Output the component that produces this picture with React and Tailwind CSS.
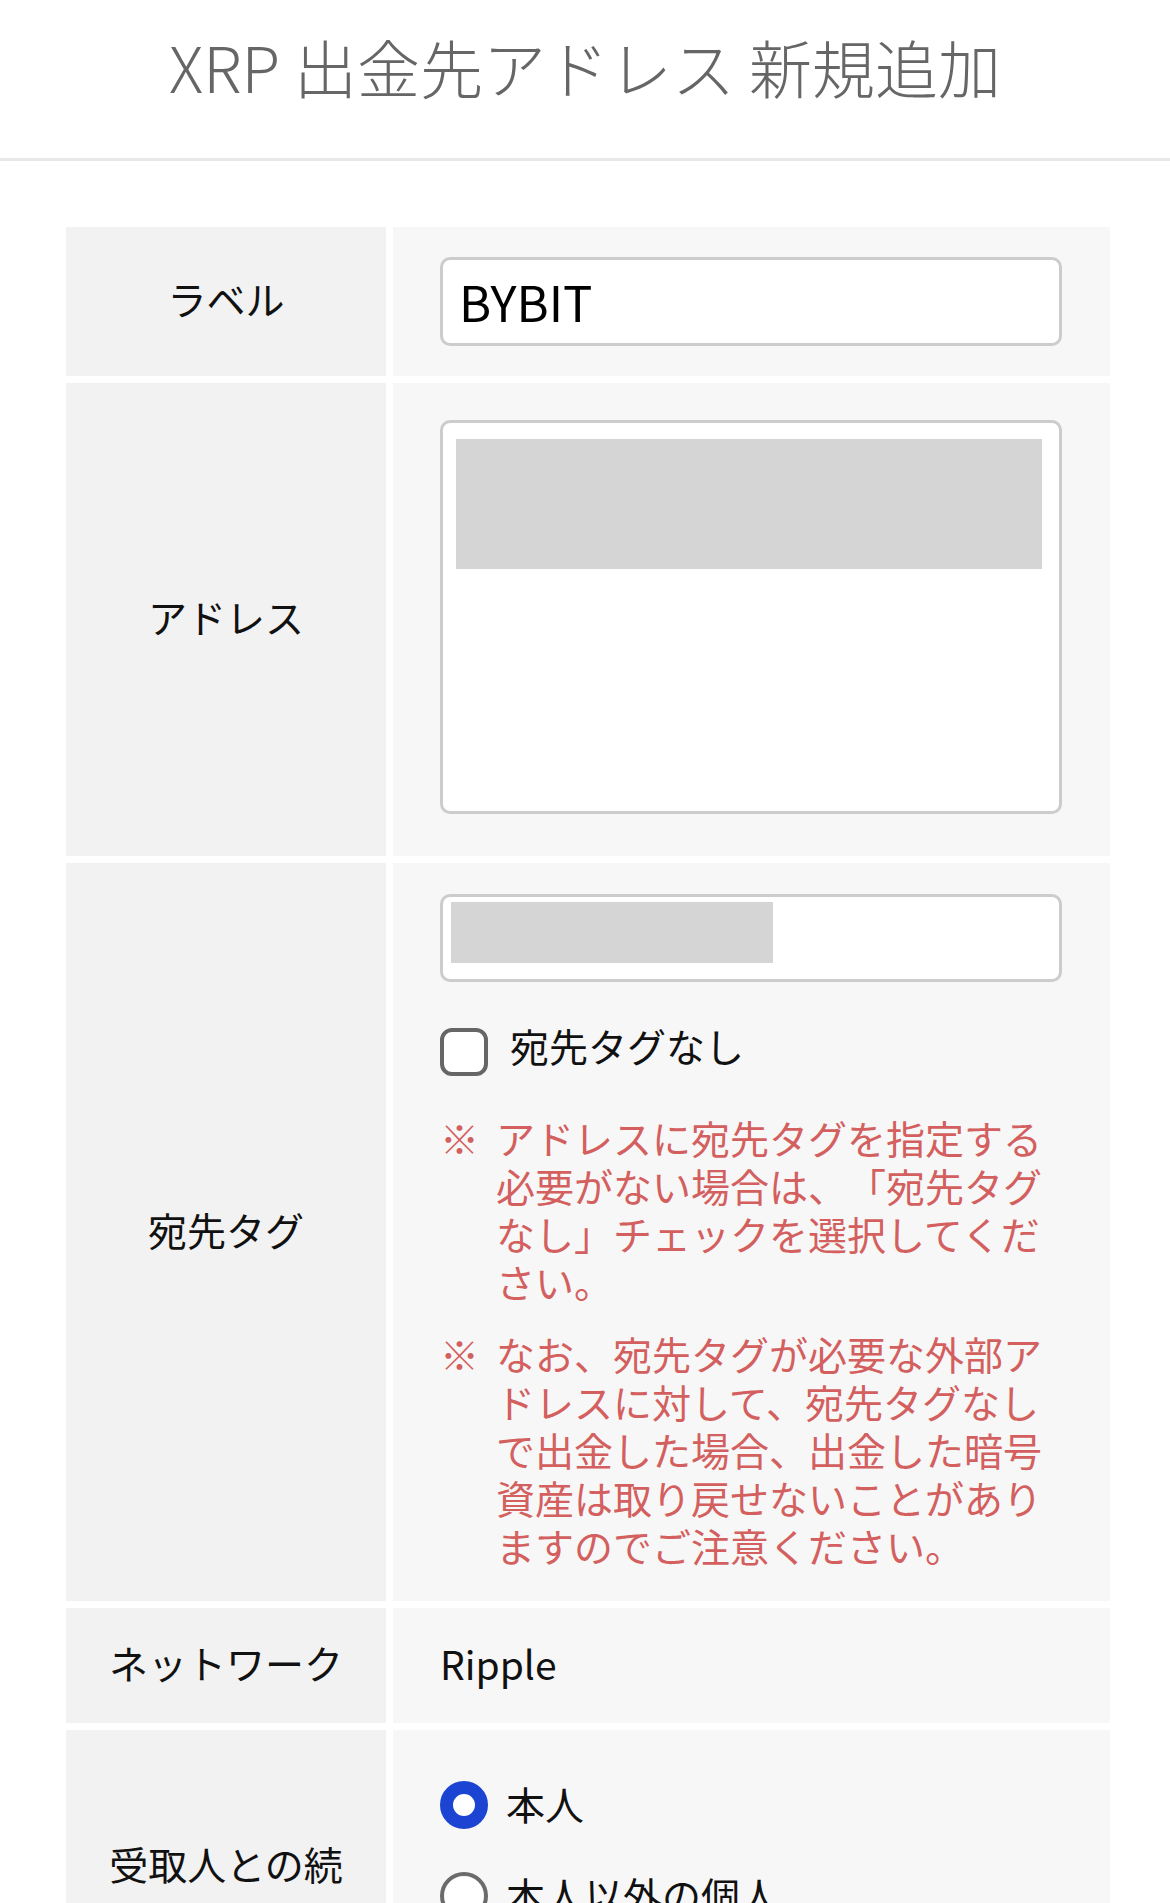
import React from "react";

const font = { fontFamily: '"Noto Sans CJK JP", "Noto Sans", sans-serif' };

function Label({ children, leading = "leading-[48px]" }) {
  return (
    <div className={"bg-[#f2f2f2] flex items-center justify-center px-[30px] pb-[7px] text-center text-[39px] text-[#111] " + leading}>
      {children}
    </div>
  );
}

function Note({ lines }) {
  return (
    <div className="flex text-[#d35f5f] text-[39px] leading-[48px] [text-spacing-trim:space-all]">
      <div className="w-[56px] shrink-0">※</div>
      <div>
        {lines.map((l, i) => (
          <div key={i} className="whitespace-nowrap">{l}</div>
        ))}
      </div>
    </div>
  );
}

function Radio({ checked, label }) {
  return (
    <div className="flex items-center h-[48px]">
      {checked ? (
        <div className="w-[48px] h-[48px] rounded-full border-[13px] border-[#1c44d3] bg-white shrink-0" />
      ) : (
        <div className="w-[48px] h-[48px] rounded-full border-[4px] border-[#6b6b6b] bg-white shrink-0" />
      )}
      <span className="ml-[18px] pb-[4px] text-[39px] leading-[48px] text-[#111]">{label}</span>
    </div>
  );
}

export default function App() {
  return (
    <div className="w-[1170px] min-h-[1903px] bg-white" style={font}>
      <div className="h-[158px] pt-[28px] text-center text-[63px] leading-[76px] font-light text-[#666666]">
        XRP 出金先アドレス 新規追加
      </div>
      <div className="h-[3px] bg-[#e8e8e8]" />
      <div className="pt-[66px] pl-[66px]">
        <div className="grid grid-cols-[320px_717px] gap-[7px]">
          {/* Row 1 */}
          <Label>ラベル</Label>
          <div className="bg-[#f7f7f7] py-[30px] pl-[47px] pr-[48px]">
            <div className="h-[89px] border-[3px] border-[#cccccc] rounded-[10px] bg-white flex items-center pl-[16px] pb-[1px] text-[49px] text-black">
              BYBIT
            </div>
          </div>

          {/* Row 2 */}
          <Label>アドレス</Label>
          <div className="bg-[#f7f7f7] pt-[37px] pb-[42px] pl-[47px] pr-[48px]">
            <div className="h-[394px] border-[3px] border-[#cccccc] rounded-[10px] bg-white pt-[16px] pl-[13px]">
              <div className="w-[586px] h-[130px] bg-[#d5d5d5]" />
            </div>
          </div>

          {/* Row 3 */}
          <Label>宛先タグ</Label>
          <div className="bg-[#f7f7f7] pt-[31px] pb-[32px] pl-[47px] pr-[48px]">
            <div className="h-[88px] border-[3px] border-[#cccccc] rounded-[10px] bg-white pt-[5px] pl-[8px]">
              <div className="w-[322px] h-[61px] bg-[#d5d5d5]" />
            </div>
            <div className="mt-[46px] h-[48px] flex items-center">
              <div className="w-[48px] h-[48px] border-[4px] border-[#666666] rounded-[12px] bg-white shrink-0" />
              <span className="ml-[22px] pb-[14px] text-[39px] leading-[48px] text-[#111]">宛先タグなし</span>
            </div>
            <div className="mt-[37px]">
              <Note
                lines={[
                  "アドレスに宛先タグを指定する",
                  "必要がない場合は、「宛先タグ",
                  "なし」チェックを選択してくだ",
                  "さい。",
                ]}
              />
            </div>
            <div className="mt-[24px]">
              <Note
                lines={[
                  "なお、宛先タグが必要な外部ア",
                  "ドレスに対して、宛先タグなし",
                  "で出金した場合、出金した暗号",
                  "資産は取り戻せないことがあり",
                  "ますのでご注意ください。",
                ]}
              />
            </div>
          </div>

          {/* Row 4 */}
          <Label>ネットワーク</Label>
          <div className="bg-[#f7f7f7] h-[115px] flex items-center pl-[47px] pb-[5px] text-[39px] leading-[48px] text-[#111]">
            Ripple
          </div>

          {/* Row 5 */}
          <Label leading="leading-[58px]">受取人との続柄</Label>
          <div className="bg-[#f7f7f7] pt-[51px] pb-[49px] pl-[47px] flex flex-col gap-[43px]">
            <Radio checked label="本人" />
            <Radio label="本人以外の個人" />
            <Radio label="法人" />
          </div>
        </div>
      </div>
    </div>
  );
}
